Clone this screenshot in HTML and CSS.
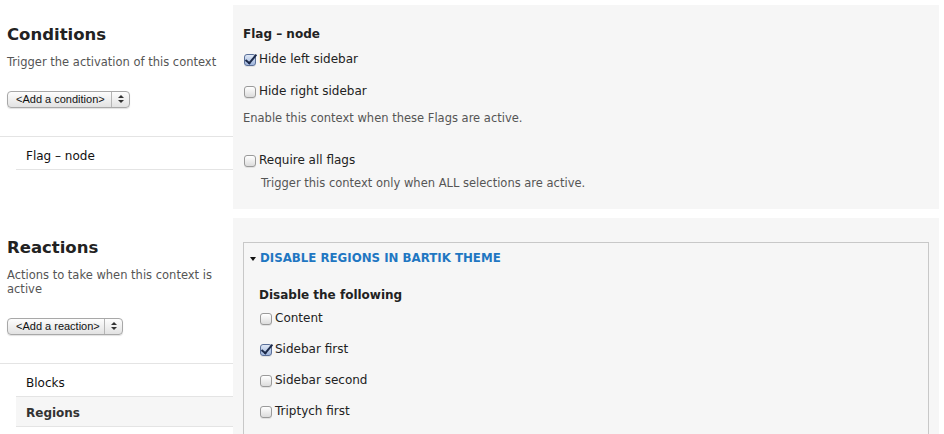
FILE: index.html
```html
<!DOCTYPE html>
<html lang="en">
<head>
    <meta charset="UTF-8">
    <title>Context UI</title>
    <link rel="stylesheet" href="styles.css">
</head>
<body>
    <div class="page">
        <section class="row">
            <div class="side">
                <h2>Conditions</h2>
                <p class="side-desc">Trigger the activation of this context</p>
                <div class="select"><span class="select-text">&lt;Add a condition&gt;</span><span class="select-arrows"></span></div>
                <ul class="tabs">
                    <li>Flag – node</li>
                </ul>
            </div>
            <div class="panel panel-conditions">
                <h3 class="item-title">Flag – node</h3>
                <label class="check check-first"><span class="box checked"></span>Hide left sidebar</label>
                <label class="check check-next"><span class="box"></span>Hide right sidebar</label>
                <p class="desc desc-flags">Enable this context when these Flags are active.</p>
                <label class="check check-require"><span class="box"></span>Require all flags</label>
                <p class="desc desc-indent">Trigger this context only when ALL selections are active.</p>
            </div>
        </section>

        <section class="row">
            <div class="side">
                <h2>Reactions</h2>
                <p class="side-desc">Actions to take when this context is active</p>
                <div class="select select-short"><span class="select-text">&lt;Add a reaction&gt;</span><span class="select-arrows"></span></div>
                <ul class="tabs">
                    <li>Blocks</li>
                    <li class="active">Regions</li>
                </ul>
            </div>
            <div class="panel panel-reactions">
                <fieldset class="group">
                    <div class="legend"><span class="caret"></span>DISABLE REGIONS IN BARTIK THEME</div>
                    <h4 class="item-title sub">Disable the following</h4>
                    <label class="check check-top"><span class="box"></span>Content</label>
                    <label class="check check-gap"><span class="box checked"></span>Sidebar first</label>
                    <label class="check check-gap"><span class="box"></span>Sidebar second</label>
                    <label class="check check-gap"><span class="box"></span>Triptych first</label>
                </fieldset>
            </div>
        </section>
    </div>
</body>
</html>
```

FILE: styles.css
```css
html, body { margin: 0; padding: 0; background: #fff; }
body { font-family: "DejaVu Sans", Verdana, sans-serif; font-size: 12px; color: #333; height: 434px; overflow: hidden; }
.page { padding-top: 5px; }

.row { display: flex; align-items: flex-start; margin-bottom: 9px; }
.row:last-child { margin-bottom: 0; }
.side { width: 233px; flex: none; }
.side h2 { margin: 18px 0 8px 7px; font-size: 16.5px; line-height: 24px; font-weight: bold; color: #222; }
.side-desc { margin: 0 10px 0 7px; font-size: 11.5px; line-height: 14px; color: #555; }

.select { display: flex; align-items: center; width: 121px; height: 15px; margin: 22px 0 28px 7px; border: 1px solid #a8a8a8; border-radius: 4px; background: linear-gradient(#fdfdfd, #e2e2e2); box-shadow: 0 1px 1px rgba(0,0,0,0.12); font-family: "Liberation Sans", Arial, sans-serif; font-size: 11px; color: #111; }
.select-short { width: 114px; }
.select-text { flex: 1; padding-left: 8px; border-right: 1px solid #b5b5b5; line-height: 15px; }
.select-arrows { width: 17px; height: 15px; position: relative; }
.select-arrows::before, .select-arrows::after { content: ""; position: absolute; left: 6px; border-left: 3px solid transparent; border-right: 3px solid transparent; }
.select-arrows::before { top: 3px; border-bottom: 3px solid #333; }
.select-arrows::after { top: 8px; border-top: 3px solid #333; }

.tabs { list-style: none; margin: 0; padding: 0; border-top: 1px solid #e4e4e4; }
.tabs li { margin-left: 16px; padding: 0 10px; height: 32px; line-height: 39px; border-bottom: 1px solid #e4e4e4; color: #111; font-size: 12px; }
.tabs li.active { background: #f6f6f6; font-weight: bold; color: #333; height: 29px; line-height: 33px; }

.panel { flex: 1; margin-right: 5px; background: #f6f6f6; padding: 0 10px; }
.panel-conditions { padding-top: 21px; padding-bottom: 18px; }
.panel-reactions { padding-top: 24px; }

.item-title { margin: 0; font-size: 12px; line-height: 16px; font-weight: bold; color: #222; }
.item-title.sub { margin-top: 21px; }

.check { display: flex; align-items: center; height: 18px; line-height: 18px; font-size: 12px; color: #222; }
.check-first { margin-top: 8px; }
.check-top { margin-top: 6px; }
.check-next { margin-top: 14px; }
.check-require { margin-top: 25px; }
.check-gap { margin-top: 13px; }

.box { width: 10px; height: 10px; margin: 1px 3px 0 1px; flex: none; border: 1px solid #9a9a9a; border-radius: 3px; background: linear-gradient(#ffffff, #dcdcdc); box-shadow: 0 1px 0 rgba(0,0,0,0.08); position: relative; }
.box.checked { border-color: #5a6f98; background: linear-gradient(#dfe8f6, #9fb5dc); }
.box.checked::after { content: ""; position: absolute; left: 3px; top: -3px; width: 4px; height: 10px; border-right: 2.5px solid #1c2a4a; border-bottom: 2.5px solid #1c2a4a; transform: rotate(40deg); }

.desc { margin: 0; font-size: 11.5px; line-height: 16px; color: #555; }
.desc-flags { margin-top: 10px; }
.desc-indent { margin-top: 6px; padding-left: 18px; }

.group { margin: 0; padding: 7px 15px 0 15px; border: 1px solid #c8c8c8; border-bottom: none; min-width: 0; height: 192px; box-sizing: border-box; }
.legend { margin-left: -9px; display: flex; align-items: center; height: 16px; font-size: 11.8px; font-weight: bold; color: #1f77c2; }
.caret { width: 0; height: 0; margin: 1px 4px 0 0; border-left: 3.5px solid transparent; border-right: 3.5px solid transparent; border-top: 4px solid #111; }
```
